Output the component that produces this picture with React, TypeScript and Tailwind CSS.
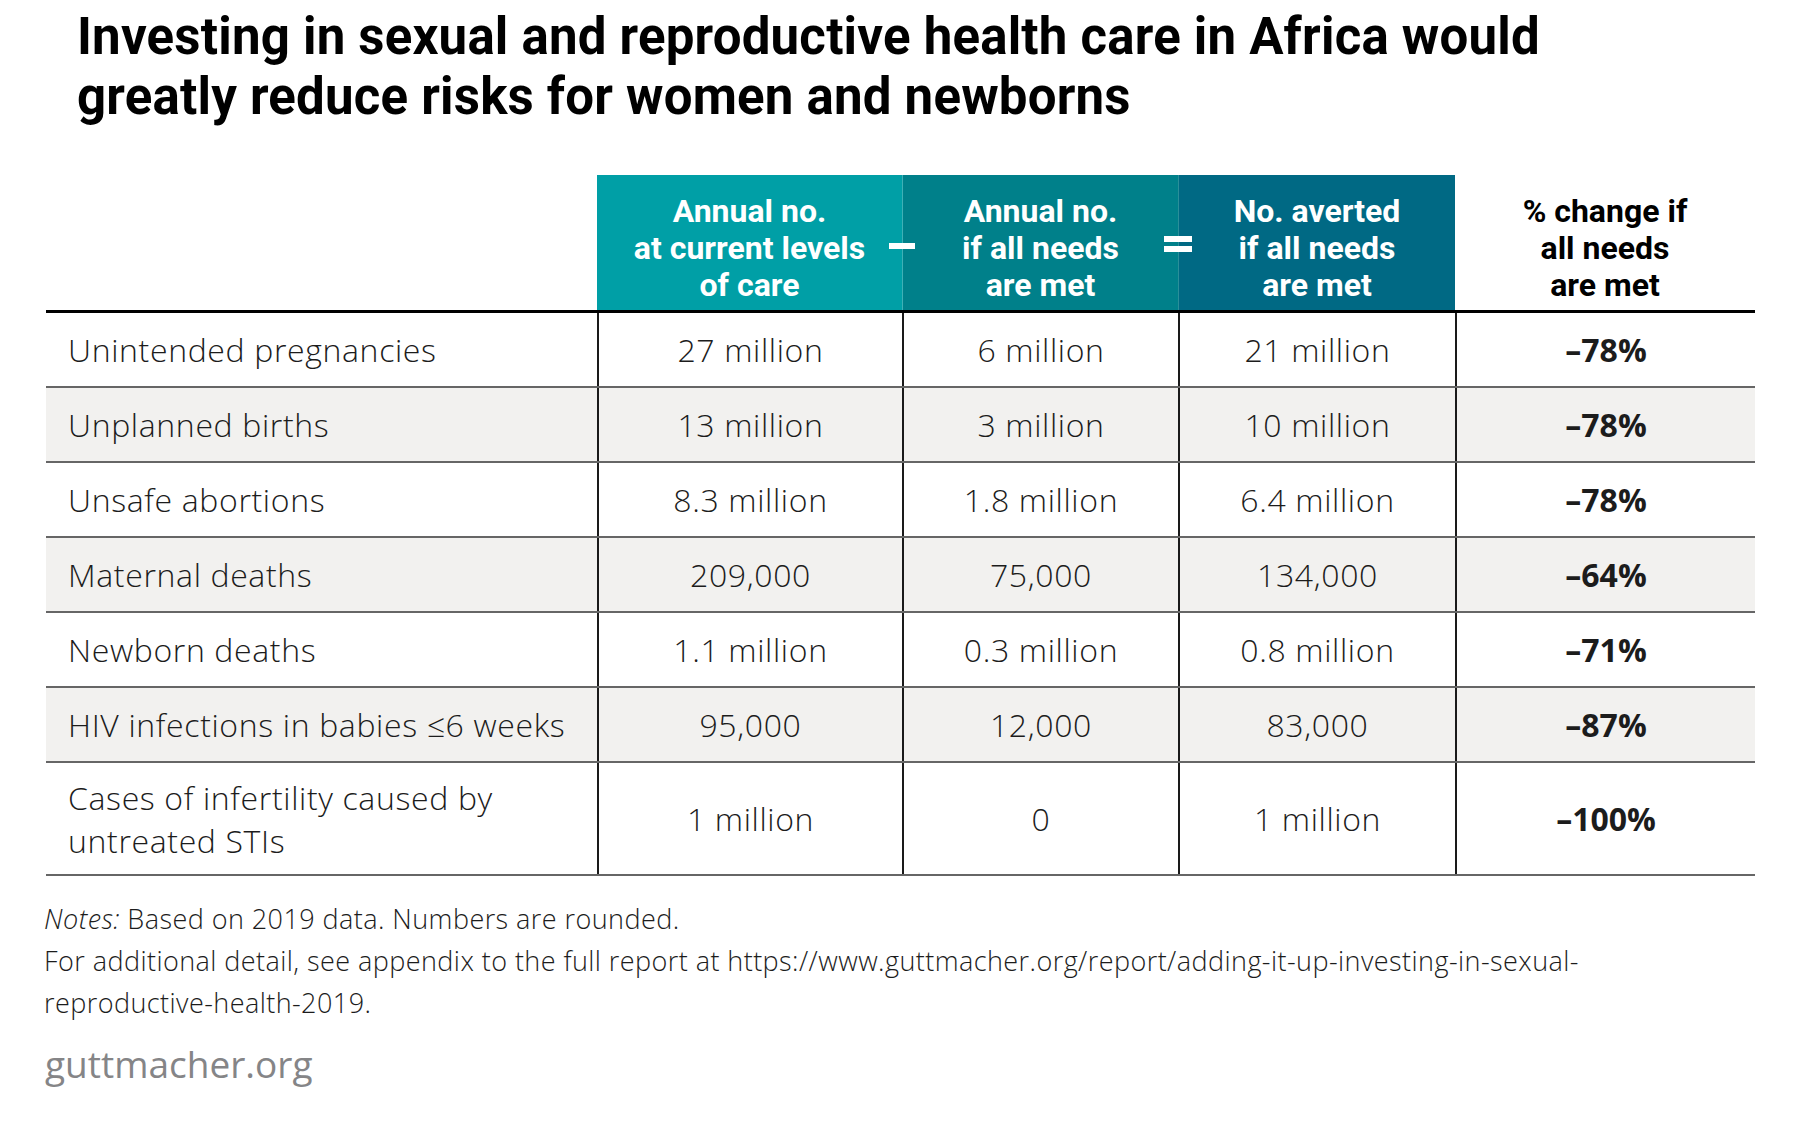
import React from 'react';

const rows = [
  { label: 'Unintended pregnancies', current: '27 million', met: '6 million', averted: '21 million', change: '–78%' },
  { label: 'Unplanned births', current: '13 million', met: '3 million', averted: '10 million', change: '–78%' },
  { label: 'Unsafe abortions', current: '8.3 million', met: '1.8 million', averted: '6.4 million', change: '–78%' },
  { label: 'Maternal deaths', current: '209,000', met: '75,000', averted: '134,000', change: '–64%' },
  { label: 'Newborn deaths', current: '1.1 million', met: '0.3 million', averted: '0.8 million', change: '–71%' },
  { label: 'HIV infections in babies ≤6 weeks', current: '95,000', met: '12,000', averted: '83,000', change: '–87%' },
];

const head = "font-['Roboto','Liberation_Sans',sans-serif]";
const body = "font-['Open_Sans','Noto_Sans',sans-serif]";

const App = () => {
  return (
    <div className="min-h-[1130px] w-[1800px] bg-white text-[#1c1c1c]">
      {/* Title */}
      <h1 className={`${head} pl-[77px] pt-[7px] text-[51px] font-bold leading-[60px] tracking-[0.004em] text-black`}>
        Investing in sexual and reproductive health care in Africa would
        <br />
        greatly reduce risks for women and newborns
      </h1>

      {/* Table */}
      <div className="ml-[46px] mt-[48px] w-[1709px]">
        {/* Header */}
        <div className="relative grid h-[138px] grid-cols-[551px_305px_276px_277px_300px] border-b-[3px] border-black">
          <div />
          <div className={`${head} bg-[#009fa6] pt-[18px] text-center text-[32px] font-bold leading-[37px] text-white`}>
            Annual no.
            <br />
            at current levels
            <br />
            of care
          </div>
          <div className={`${head} border-l border-[#3fb0b6] bg-[#00808a] pt-[18px] text-center text-[32px] font-bold leading-[37px] text-white`}>
            Annual no.
            <br />
            if all needs
            <br />
            are met
          </div>
          <div className={`${head} border-l border-[#2a8f9a] bg-[#006984] pt-[18px] text-center text-[32px] font-bold leading-[37px] text-white`}>
            No. averted
            <br />
            if all needs
            <br />
            are met
          </div>
          <div className={`${head} pt-[18px] text-center text-[32px] font-bold leading-[37px] text-black`}>
            % change if
            <br />
            all needs
            <br />
            are met
          </div>

          {/* Operators */}
          <div className="absolute left-[843px] top-[68px] h-[6px] w-[26px] bg-white" />
          <div className="absolute left-[1118px] top-[61px] flex w-[28px] flex-col gap-[4px]">
            <div className="h-[6px] bg-white" />
            <div className="h-[6px] bg-white" />
          </div>
        </div>

        {/* Body */}
        {rows.map((r, i) => (
          <div
            key={r.label}
            className={`${body} grid h-[75px] grid-cols-[551px_305px_276px_277px_300px] border-b-2 border-[#666666] text-[32px] leading-[36px] tracking-[0.02em] ${i % 2 === 1 ? 'bg-[#f2f1ef]' : 'bg-white'}`}
          >
            <div className="flex items-center pl-[22px] font-light">{r.label}</div>
            <div className="flex items-center justify-center border-l-2 border-[#1a1a1a] font-light">{r.current}</div>
            <div className="flex items-center justify-center border-l-2 border-[#1a1a1a] font-light">{r.met}</div>
            <div className="flex items-center justify-center border-l-2 border-[#1a1a1a] font-light">{r.averted}</div>
            <div className="flex items-center justify-center border-l-2 border-[#1a1a1a] font-bold tracking-normal">{r.change}</div>
          </div>
        ))}
        <div className={`${body} grid h-[113px] grid-cols-[551px_305px_276px_277px_300px] border-b-2 border-[#666666] text-[32px] leading-[36px] tracking-[0.02em]`}>
          <div className="flex items-center pl-[22px] font-light leading-[43px]">
            Cases of infertility caused by
            <br />
            untreated STIs
          </div>
          <div className="flex items-center justify-center border-l-2 border-[#1a1a1a] font-light">1 million</div>
          <div className="flex items-center justify-center border-l-2 border-[#1a1a1a] font-light">0</div>
          <div className="flex items-center justify-center border-l-2 border-[#1a1a1a] font-light">1 million</div>
          <div className="flex items-center justify-center border-l-2 border-[#1a1a1a] font-bold tracking-normal">–100%</div>
        </div>
      </div>

      {/* Notes */}
      <div className={`${body} ml-[44px] mt-[22px] whitespace-nowrap text-[27px] font-light leading-[42px] tracking-[0.016em]`}>
        <div>
          <span className="italic">Notes:</span> Based on 2019 data. Numbers are rounded.
        </div>
        <div>For additional detail, see appendix to the full report at https://www.guttmacher.org/report/adding-it-up-investing-in-sexual-</div>
        <div>reproductive-health-2019.</div>
      </div>

      {/* Logo */}
      <div className={`${body} ml-[45px] mt-[18px] text-[37px] leading-[44px] text-[#858587]`}>guttmacher.org</div>
    </div>
  );
};

export default App;
